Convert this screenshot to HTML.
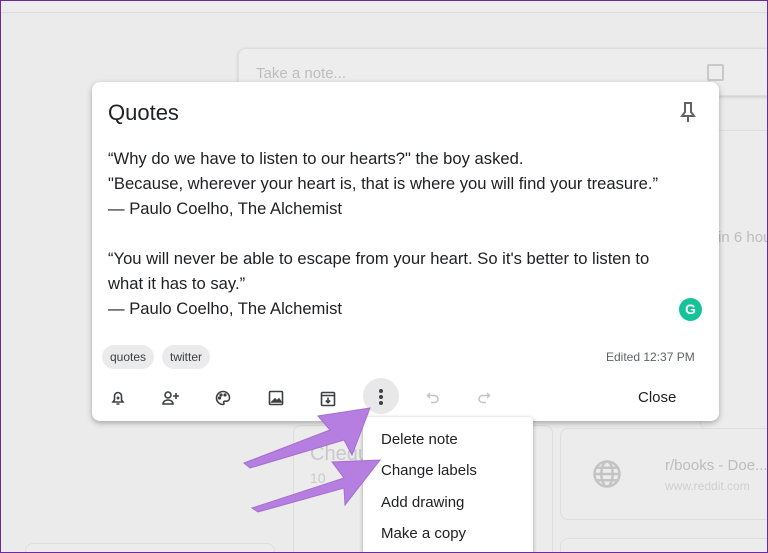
<!DOCTYPE html>
<html><head><style>
*{margin:0;padding:0;box-sizing:border-box}
html,body{width:768px;height:553px;overflow:hidden}
body{background:#ebebeb;font-family:"Liberation Sans",Arial,sans-serif}
#w{position:relative;width:768px;height:553px;overflow:hidden;background:#ebebeb}
.abs{position:absolute;white-space:nowrap}
.card{position:absolute;border:1px solid #dedede;border-radius:8px;background:#ececec}
.note{left:92px;top:82px;width:627px;height:339px;background:#fff;border-radius:8px;box-shadow:0 2px 6px rgba(0,0,0,.3)}
.body{position:absolute;left:16px;top:64px;font-size:16.6px;line-height:25px;color:#202124;white-space:nowrap}
.chip{position:absolute;top:263px;height:24px;border-radius:12px;background:#ebebeb;font-size:12px;color:#3c4043;line-height:24px;padding:0 8px}
.menu{left:363px;top:417px;width:170px;height:140px;background:#fff;box-shadow:0 1px 4px rgba(0,0,0,.3);border-radius:4px}
.menu div{position:absolute;left:18px;font-size:15px;color:#202124}
svg.i{position:absolute}
</style></head><body><div id="w">
<div class="abs" style="left:0;top:0;width:768px;height:13px;background:#ececec;border-bottom:1px solid #dcdcdc"></div>
<div class="card" style="left:238px;top:48px;width:540px;height:48px;background:#ededed;box-shadow:0 1px 3px rgba(0,0,0,.15)">
<div class="abs" style="left:17px;top:16px;font-size:15px;color:#bdbdbd">Take a note...</div>
<div class="abs" style="left:468px;top:15px;width:17px;height:17px;border:2px solid #c8c8c8;border-radius:2px"></div>
</div>
<div class="card" style="left:700px;top:130px;width:80px;height:300px"></div>
<div class="abs" style="left:718px;top:229px;font-size:15px;color:#bdbdbd">in 6 hou</div>
<div class="card" style="left:293px;top:425px;width:260px;height:140px"></div>
<div class="abs" style="left:310px;top:443px;font-size:20px;color:#c9c9c9">Chequ</div>
<div class="abs" style="left:310px;top:470px;font-size:14px;color:#c9c9c9">10</div>
<div class="card" style="left:560px;top:428px;width:220px;height:92px"></div>
<svg class="i" style="left:592px;top:459px" width="30" height="30" viewBox="0 0 24 24" fill="none" stroke="#c4c4c4" stroke-width="2"><circle cx="12" cy="12" r="10"/><ellipse cx="12" cy="12" rx="4.5" ry="10"/><path d="M2 12h20M4 7h16M4 17h16"/></svg>
<div class="abs" style="left:665px;top:457px;font-size:15px;color:#bdbdbd">r/books - Doe...</div>
<div class="abs" style="left:665px;top:479px;font-size:12px;color:#cfcfcf">www.reddit.com</div>
<div class="card" style="left:560px;top:538px;width:220px;height:30px"></div>
<div class="card" style="left:25px;top:543px;width:250px;height:30px"></div>

<div class="note abs">
<div class="abs" style="left:16px;top:18px;font-size:22px;color:#202124">Quotes</div>
<svg class="i" style="left:586px;top:18px" width="20" height="24" viewBox="0 0 20 24" fill="none" stroke="#5f6368" stroke-width="2"><path d="M6 3h8M7 3v9l-3 4h12l-3-4V3M10 16v6"/></svg>
<div class="body">“Why do we have to listen to our hearts?" the boy asked.<br>"Because, wherever your heart is, that is where you will find your treasure.”<br>— Paulo Coelho, The Alchemist<br><br>“You will never be able to escape from your heart. So it's better to listen to<br>what it has to say.”<br>— Paulo Coelho, The Alchemist</div>
<div class="abs" style="left:587px;top:216px;width:23px;height:23px;border-radius:50%;background:#15c39a;color:#fff;font-size:14px;font-weight:bold;text-align:center;line-height:23px">G</div>
<div class="chip" style="left:10px">quotes</div>
<div class="chip" style="left:70px">twitter</div>
<div class="abs" style="left:514px;top:268px;font-size:12px;color:#5f6368">Edited 12:37 PM</div>
<div class="abs" style="left:271px;top:296px;width:36px;height:36px;border-radius:50%;background:#e8e8e8"></div>
<svg class="i" style="left:18px;top:308px" width="16" height="16" viewBox="0 0 16 16" fill="none" stroke="#3c4043" stroke-width="1.6"><path d="M3 12h10l-1.5-2V6a3.5 3.5 0 0 0-7 0v4zM6.5 14h3M8 6.5v3M6.5 8h3"/></svg>
<svg class="i" style="left:70px;top:308px" width="18" height="16" viewBox="0 0 18 16" fill="none" stroke="#3c4043" stroke-width="1.6"><circle cx="6" cy="5" r="3"/><path d="M1 14c0-3 3-4 5-4s5 1 5 4zM14 3v6M11 6h6"/></svg>
<svg class="i" style="left:123px;top:308px" width="16" height="16" viewBox="0 0 16 16" fill="none" stroke="#3c4043" stroke-width="1.6"><path d="M8 1.5a6.5 6.5 0 0 0 0 13c1 0 1.2-.8.8-1.5-.5-.8 0-1.8 1-1.8h1.7a3 3 0 0 0 3-3C14.5 4 11.5 1.5 8 1.5z"/><circle cx="4.5" cy="8" r=".8" fill="#3c4043"/><circle cx="6" cy="5" r=".8" fill="#3c4043"/><circle cx="10" cy="5" r=".8" fill="#3c4043"/></svg>
<svg class="i" style="left:176px;top:308px" width="16" height="16" viewBox="0 0 16 16" fill="none" stroke="#3c4043" stroke-width="1.6"><rect x="1.5" y="1.5" width="13" height="13" rx="1"/><path d="M4 12l3-3 2 2 2-2 2 3z" fill="#3c4043"/></svg>
<svg class="i" style="left:228px;top:308px" width="16" height="17" viewBox="0 0 16 17" fill="none" stroke="#3c4043" stroke-width="1.6"><rect x="1.5" y="2.5" width="13" height="13" rx="1"/><path d="M1.5 5.5h13M8 7.5v5M5.8 10.5 8 12.7l2.2-2.2"/></svg>
<svg class="i" style="left:286px;top:306px" width="6" height="18" viewBox="0 0 6 18" fill="#3c4043"><circle cx="3" cy="3" r="2"/><circle cx="3" cy="9" r="2"/><circle cx="3" cy="15" r="2"/></svg>
<svg class="i" style="left:334px;top:309px" width="14" height="14" viewBox="0 0 14 14" fill="none" stroke="#c4c4c4" stroke-width="1.5"><path d="M4 2 1.5 4.5 4 7M1.5 4.5h7a3.5 3.5 0 0 1 0 7H5"/></svg>
<svg class="i" style="left:385px;top:309px" width="14" height="14" viewBox="0 0 14 14" fill="none" stroke="#c4c4c4" stroke-width="1.5"><path d="M10 2l2.5 2.5L10 7M12.5 4.5h-7a3.5 3.5 0 0 0 0 7H9"/></svg>
<div class="abs" style="left:546px;top:307px;font-size:15px;color:#202124">Close</div>
</div>

<div class="menu abs">
<div style="top:14px">Delete note</div>
<div style="top:45px">Change labels</div>
<div style="top:77px">Add drawing</div>
<div style="top:108px">Make a copy</div>
</div>

<svg class="abs" style="left:0;top:0" width="768" height="553">
<polygon points="244,463 330,430 318,416 370,408 352,455 344,440 250,468" fill="#b57ee0" stroke="#a46fd0" stroke-width="1"/>
<polygon points="252,508 344,478 332,462 380,460 345,505 344,488 258,512" fill="#b57ee0" stroke="#a46fd0" stroke-width="1"/>
</svg>
<div class="abs" style="left:0;top:0;width:768px;height:553px;border:1px solid #6b2aa0;pointer-events:none"></div>
</div></body></html>
